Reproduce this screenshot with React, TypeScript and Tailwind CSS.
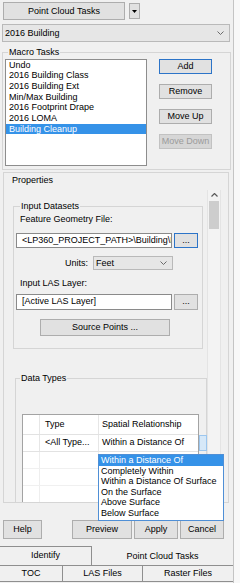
import type { ReactNode } from "react";

const macroTasks = [
  "Undo",
  "2016 Building Class",
  "2016 Building Ext",
  "Min/Max Building",
  "2016 Footprint Drape",
  "2016 LOMA",
  "Building Cleanup",
];

const relationships = [
  "Within a Distance Of",
  "Completely Within",
  "Within a Distance Of Surface",
  "On the Surface",
  "Above Surface",
  "Below Surface",
];

interface BtnProps {
  children?: ReactNode;
  className?: string;
  focused?: boolean;
  disabled?: boolean;
}

function Btn({ children, className = "", focused = false, disabled = false }: BtnProps) {
  const tone = disabled
    ? "bg-[#d6d6d6] border-[#c2c2c2] text-[#9b9b9b]"
    : focused
    ? "bg-[#e1e1e1] border-[#2c74c8] text-black"
    : "bg-[#e1e1e1] border-[#adadad] text-black";
  return (
    <button
      type="button"
      className={`flex items-center justify-center border leading-[10.7px] ${tone} ${className}`}
    >
      {children}
    </button>
  );
}

function Chevron() {
  return (
    <svg width="7" height="4" viewBox="0 0 7 4">
      <polyline points="0.5,0.5 3.5,3.5 6.5,0.5" fill="none" stroke="#6b6b6b" strokeWidth="1" />
    </svg>
  );
}

function Combo({ text, className = "" }: { text: string; className?: string }) {
  return (
    <div
      className={`flex items-center justify-between bg-[#e6e6e6] border border-[#b9b9b9] pl-[2px] pr-[5px] ${className}`}
    >
      <span>{text}</span>
      <Chevron />
    </div>
  );
}

function TextBox({ text, className = "" }: { text: string; className?: string }) {
  return (
    <div
      className={`flex items-center bg-white border border-[#8a8a8a] pl-[5px] overflow-hidden whitespace-nowrap ${className}`}
    >
      {text}
    </div>
  );
}

export default function App() {
  return (
    <div className="relative flex w-[240px] h-[583px] overflow-hidden bg-[#f8f8f8] font-['Liberation_Sans',Arial,sans-serif] text-[9px] leading-[10.7px] text-black">
      <div className="flex flex-col w-[234px] h-full bg-[#f0f0f0] border-r border-[#c4c4c4]">
        {/* task picker */}
        <div className="flex items-start gap-[4px] pl-[3px] pt-[2px]">
          <Btn className="w-[122px] h-[18px]">Point Cloud Tasks</Btn>
          <Btn className="w-[11px] h-[16px] mt-[1px]">
            <svg width="5" height="3" viewBox="0 0 5 3">
              <polygon points="0,0 5,0 2.5,3" fill="#000" />
            </svg>
          </Btn>
        </div>
        <Combo text="2016 Building" className="mt-[4px] ml-[2px] w-[228px] h-[18px]" />

        {/* macro tasks */}
        <fieldset className="mt-[5px] ml-[2px] w-[229px] border border-[#d5d5d5]">
          <legend className="ml-[5px] px-[1px]">Macro Tasks</legend>
          <div className="flex pl-[2px] pt-[1px] pb-[3px]">
            <div className="w-[142px] h-[107px] bg-white border border-[#8d8d8d] flex flex-col">
              {macroTasks.map((t) => (
                <div
                  key={t}
                  className={`h-[10.67px] pl-[3px] ${
                    t === "Building Cleanup" ? "bg-[#3592e8] text-white" : ""
                  }`}
                >
                  {t}
                </div>
              ))}
            </div>
            <div className="flex flex-col gap-[10px] ml-[12px]">
              <Btn focused className="w-[53px] h-[15px]">Add</Btn>
              <Btn className="w-[53px] h-[15px]">Remove</Btn>
              <Btn className="w-[53px] h-[15px]">Move Up</Btn>
              <Btn disabled className="w-[53px] h-[15px]">Move Down</Btn>
            </div>
          </div>
        </fieldset>

        {/* properties */}
        <div className="flex flex-col mt-[2px] ml-[3px] w-[226px] h-[331px] border border-[#d5d5d5]">
          <div className="h-[17px] pl-[8px] pt-[2px]">Properties</div>
          <div className="flex h-[312px]">
            <div className="flex flex-col w-[194px] ml-[9px] overflow-hidden">
              <fieldset className="mt-[11px] w-[190px] border border-[#d5d5d5]">
                <legend className="ml-[6px] px-[1px]">Input Datasets</legend>
                <div className="flex flex-col pl-[2px] pt-[3px] pb-[12px]">
                  <div className="pl-[4px]">Feature Geometry File:</div>
                  <div className="flex gap-[2px] mt-[8px]">
                    <TextBox text="<LP360_PROJECT_PATH>\Building\E" className="w-[156px] h-[15px]" />
                    <Btn focused className="w-[24px] h-[15px]">...</Btn>
                  </div>
                  <div className="flex items-center gap-[5px] mt-[8px]">
                    <div className="w-[72px] text-right">Units:</div>
                    <Combo text="Feet" className="w-[80px] h-[14px]" />
                  </div>
                  <div className="pl-[4px] mt-[8px]">Input LAS Layer:</div>
                  <div className="flex gap-[2px] mt-[5px]">
                    <TextBox text="[Active LAS Layer]" className="w-[156px] h-[16px]" />
                    <Btn className="w-[24px] h-[16px]">...</Btn>
                  </div>
                  <Btn className="ml-[24px] mt-[9px] w-[130px] h-[17px]">Source Points ...</Btn>
                </div>
              </fieldset>

              <fieldset className="mt-[24px] ml-[2px] w-[192px] h-[200px] shrink-0 border border-[#d5d5d5]">
                <legend className="ml-[4px] px-[1px]">Data Types</legend>
                <div className="pl-[6px] pt-[30px]">
                  <div className="flex flex-col w-[177px] h-[120px] bg-white border border-[#a3a3a3]">
                    <div className="flex h-[20px] border-b border-[#e2e2e2] items-center">
                      <div className="w-[17px] h-full border-r border-[#e6e6e6]" />
                      <div className="w-[59px] h-full flex items-center pl-[5px] border-r border-[#e6e6e6]">Type</div>
                      <div className="flex-1 pl-[3px]">Spatial Relationship</div>
                    </div>
                    <div className="relative flex h-[17px] border-b border-[#e2e2e2] items-center">
                      <div className="w-[17px] h-full border-r border-[#e6e6e6]" />
                      <div className="w-[59px] h-full flex items-center pl-[5px] border-r border-[#e6e6e6] whitespace-nowrap overflow-hidden">
                        &lt;All Type...
                      </div>
                      <div className="flex-1 pl-[3px] whitespace-nowrap">Within a Distance Of</div>
                      <div className="absolute right-[-9px] top-0 w-[8px] h-[16px] bg-[#d6e8f8] border border-[#9cc6ee]" />
                    </div>
                    {[0, 1, 2].map((r) => (
                      <div key={r} className="flex h-[17px] border-b border-[#f0f0f0]">
                        <div className="w-[17px] h-full border-r border-[#eeeeee]" />
                        <div className="w-[59px] h-full border-r border-[#eeeeee]" />
                      </div>
                    ))}
                  </div>
                </div>
              </fieldset>
            </div>
            {/* vertical scrollbar */}
            <div className="flex flex-col w-[14px] h-full bg-[#f3f3f3] border-x border-[#e4e4e4]">
              <div className="h-[11px] flex items-center justify-center">
                <svg width="7" height="4" viewBox="0 0 7 4">
                  <polyline points="0.5,3.5 3.5,0.5 6.5,3.5" fill="none" stroke="#5a5a5a" strokeWidth="1.2" />
                </svg>
              </div>
              <div className="mx-[1px] h-[28px] bg-[#cdcdcd]" />
            </div>
          </div>
        </div>

        {/* dialog buttons */}
        <div className="flex mt-[17px]">
          <Btn className="ml-[3px] w-[39px] h-[19px]">Help</Btn>
          <Btn className="ml-[30px] w-[60px] h-[19px]">Preview</Btn>
          <Btn className="ml-[2px] w-[44px] h-[19px]">Apply</Btn>
          <Btn className="ml-[2px] w-[44px] h-[19px]">Cancel</Btn>
        </div>

        {/* tabs */}
        <div className="flex mt-[7px] h-[19px]">
          <div className="w-[92px] flex items-center justify-center border-t border-r border-[#8f8f8f]">Identify</div>
          <div className="flex-1 flex items-center justify-center pt-[3px]">Point Cloud Tasks</div>
        </div>
        <div className="flex h-[17px] border-y border-[#8f8f8f]">
          <div className="w-[63px] flex items-center justify-center border-r border-[#8f8f8f]">TOC</div>
          <div className="w-[80px] flex items-center justify-center border-r border-[#8f8f8f]">LAS Files</div>
          <div className="flex-1 flex items-center justify-center">Raster Files</div>
        </div>
      </div>

      {/* open relationship dropdown */}
      <div className="absolute left-[98px] top-[454px] w-[126px] h-[67px] bg-white border border-[#4f8fd6] flex flex-col">
        {relationships.map((r, i) => (
          <div
            key={r}
            className={`h-[10.6px] pl-[2px] whitespace-nowrap ${i === 0 ? "bg-[#3592e8] text-white" : ""}`}
          >
            {r}
          </div>
        ))}
      </div>
    </div>
  );
}
